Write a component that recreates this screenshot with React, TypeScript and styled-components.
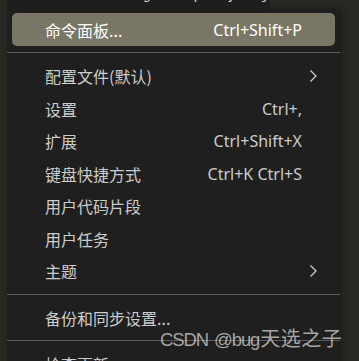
import React from 'react'
import styled, { createGlobalStyle } from 'styled-components'

const GlobalStyle = createGlobalStyle`
  html, body {
    margin: 0;
    padding: 0;
    background: #292924;
    overflow: hidden;
  }
`

const Page = styled.div`
  position: relative;
  width: 359px;
  height: 361px;
  overflow: hidden;
  background: #292924;
  font-family: 'Noto Sans', 'Noto Sans CJK SC', sans-serif;
`

const EditorStrip = styled.div`
  margin-left: 7px;
  width: 263px;
  height: 9px;
  background: #1e1e1e;
  overflow: hidden;
  position: relative;
`

const CodeLine = styled.div`
  position: absolute;
  left: 60px;
  top: -14px;
  font-family: 'DejaVu Sans Mono', monospace;
  font-size: 14px;
  white-space: pre;
  color: #d4d4d4;
`

const Yellow = styled.span`
  color: #dcdc8b;
`

const Menu = styled.div`
  margin-left: 7px;
  width: 333px;
  background: #1f1f1f;
  padding-top: 4px;
  box-shadow: 2px 0 6px rgba(0, 0, 0, 0.35);
  display: flex;
  flex-direction: column;
`

const Row = styled.div<{ $active?: boolean }>`
  height: 32.5px;
  margin: 0 5px;
  padding: 1px 33px 0 33px;
  box-sizing: border-box;
  display: flex;
  align-items: center;
  justify-content: space-between;
  border-radius: 5px;
  background: ${({ $active }) => ($active ? '#7a7665' : 'transparent')};
  color: ${({ $active }) => ($active ? '#ffffff' : '#cccccc')};
`

const Label = styled.span`
  font-family: 'Noto Sans CJK SC', sans-serif;
  font-size: 16px;
  white-space: nowrap;
`

const Shortcut = styled.span`
  font-family: 'Noto Sans', sans-serif;
  font-size: 16px;
  white-space: nowrap;
`

const Chevron = styled.svg`
  margin-right: -16px;
  display: block;
`

const Separator = styled.div`
  height: 1px;
  margin: 6.5px 0;
  background: #5c5c5c;
`

const Watermark = styled.div`
  position: absolute;
  left: 160px;
  top: 323px;
  color: rgba(220, 220, 220, 0.72);
  white-space: nowrap;
`

const MarkLatin = styled.span`
  font-family: 'Liberation Sans', sans-serif;
  font-size: 18.5px;
  letter-spacing: -1.1px;
  word-spacing: 2px;
  margin-right: 1px;
`

const MarkCjk = styled.span`
  font-family: 'Noto Sans CJK SC', sans-serif;
  font-size: 20px;
  letter-spacing: 0.5px;
`

type Item = { label: string; shortcut?: string; submenu?: boolean; active?: boolean }

const groups: Item[][] = [
  [{ label: '命令面板...', shortcut: 'Ctrl+Shift+P', active: true }],
  [
    { label: '配置文件(默认)', submenu: true },
    { label: '设置', shortcut: 'Ctrl+,' },
    { label: '扩展', shortcut: 'Ctrl+Shift+X' },
    { label: '键盘快捷方式', shortcut: 'Ctrl+K Ctrl+S' },
    { label: '用户代码片段' },
    { label: '用户任务' },
    { label: '主题', submenu: true },
  ],
  [{ label: '备份和同步设置...' }],
  [{ label: '检查更新...' }],
]

function ChevronRight() {
  return (
    <Chevron width="10" height="14" viewBox="0 0 10 14">
      <polyline points="2.5,1.5 8,7 2.5,12.5" fill="none" stroke="#cccccc" strokeWidth="1.3" />
    </Chevron>
  )
}

export default function App() {
  return (
    <Page>
      <GlobalStyle />
      <EditorStrip>
        <CodeLine>
          <Yellow>f</Yellow>{'    ud  g  r  p   yd  j   '}
        </CodeLine>
      </EditorStrip>
      <Menu>
        {groups.map((group, gi) => (
          <React.Fragment key={gi}>
            {gi > 0 && <Separator />}
            {group.map((item) => (
              <Row key={item.label} $active={item.active}>
                <Label>{item.label}</Label>
                {item.shortcut && <Shortcut>{item.shortcut}</Shortcut>}
                {item.submenu && <ChevronRight />}
              </Row>
            ))}
          </React.Fragment>
        ))}
      </Menu>
      <Watermark>
        <MarkLatin>CSDN @bug</MarkLatin>
        <MarkCjk>天选之子</MarkCjk>
      </Watermark>
    </Page>
  )
}
